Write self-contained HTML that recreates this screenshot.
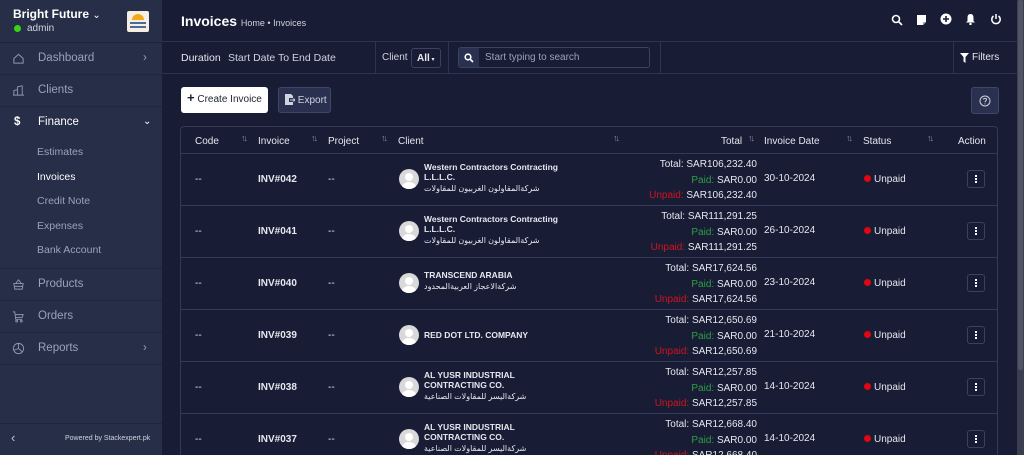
<!DOCTYPE html>
<html style="height:455px;overflow:hidden"><head><meta charset="utf-8"><style>
*{box-sizing:border-box;margin:0;padding:0}
html,body{width:1024px;height:455px;overflow:hidden}
body{background:#181c35;font-family:"Liberation Sans","DejaVu Sans",sans-serif;color:#e6e8ef;font-size:11px;position:relative}
.sb{position:absolute;left:0;top:0;width:162px;height:455px;background:#272e48}
.abs{position:absolute}
.nav{position:absolute;left:0;width:162px;height:32px;border-top:1px solid #20263d;color:#9aa3bb;font-size:11.5px}
.nav span{position:absolute;left:38px;top:9px}
.nav .ic{position:absolute;left:12px;top:9px;width:13px;height:13px}
.sub{position:absolute;left:37px;color:#9aa3bb;font-size:10.5px}
.hd{position:absolute;left:162px;top:0;right:6px;height:42px;border-bottom:1px solid #2d3350}
.fb{position:absolute;left:162px;top:42px;right:6px;height:32px;border-bottom:1px solid #2d3350}
.vl{position:absolute;top:42px;height:32px;width:1px;background:#2d3350}
.tbl{position:absolute;left:180px;top:126px;width:818px;height:329px;border:1px solid #343a56;border-bottom:none;border-radius:4px 4px 0 0;overflow:hidden}
.row{position:absolute;left:0;width:816px;border-top:1px solid #343a56;height:52px}
.th{position:absolute;top:9px;font-size:10px;color:#e6e8ef}
.sort{position:absolute;top:6px;font-size:9px;color:#8a91a8;letter-spacing:-2px}
.c{position:absolute;font-size:10px}
.av{position:absolute;left:218px;width:20px;height:20px;border-radius:50%;background:#d9d9d9;overflow:hidden}
.av:before{content:"";position:absolute;left:6px;top:4px;width:8px;height:8px;border-radius:50%;background:#fff}
.av:after{content:"";position:absolute;left:3px;top:13px;width:14px;height:10px;border-radius:50%;background:#fff}
.nm{position:absolute;left:243px;font-size:8.5px;font-weight:bold;line-height:10px;color:#e6e8ef}
.ar{font-size:8px;font-weight:normal;margin-top:2px;direction:rtl;text-align:left}
.tot{position:absolute;right:240px;text-align:right;font-size:10px;line-height:15.5px;width:120px}
.g{color:#2ea043}.r{color:#d0151f}
.dt{position:absolute;left:583px;font-size:10px}
.st{position:absolute;left:683px;font-size:10px}
.st:before{content:"";display:inline-block;width:7px;height:7px;border-radius:50%;background:#e0060f;margin-right:3px;vertical-align:-0px}
.act{position:absolute;left:786px;width:18px;height:18px;border:1px solid #3b4260;border-radius:3px}
.act i{position:absolute;left:7px;width:2px;height:2px;background:#fff}
</style></head><body>
<div class="sb">
 <div class="abs" style="left:13px;top:7px;font-weight:bold;font-size:12px;color:#fff">Bright Future <span style="font-weight:normal;font-size:10px">&#8964;</span></div>
 <div class="abs" style="left:14px;top:25px;width:7px;height:7px;border-radius:50%;background:#39d312"></div>
 <div class="abs" style="left:27px;top:23px;font-size:10px;color:#cfd3de">admin</div>
 <div class="abs" style="left:127px;top:11px;width:22px;height:21px;background:#f4efe2;border-radius:2px;overflow:hidden"><div style="margin:3px auto 0;width:12px;height:6px;border-radius:6px 6px 0 0;background:#f4a71c"></div><div style="margin:2px 3px;height:2px;background:#4a6a9a"></div><div style="margin:1px 3px;height:2px;background:#4a6a9a"></div></div>
 <div class="nav" style="top:42px;border-top:1px solid #1d2338"><svg class="ic" viewBox="0 0 14 14" fill="none" stroke="#8e97ae" stroke-width="1.1"><path d="M2 7L7 2.5 12 7V12H2Z"/></svg><span>Dashboard</span><span style="left:143px">&#8250;</span></div>
 <div class="nav" style="top:74px"><svg class="ic" viewBox="0 0 14 14" fill="none" stroke="#8e97ae" stroke-width="1"><path d="M2 12V7L6 6V12M6 12V3L11 2V12M1 12H13"/></svg><span>Clients</span></div>
 <div class="nav" style="top:106px;color:#fff"><span style="left:14px;font-weight:bold">$</span><span>Finance</span><span style="left:143px;font-size:10px">&#8964;</span></div>
 <div class="sub" style="top:146px">Estimates</div>
 <div class="sub" style="top:171px;color:#fff">Invoices</div>
 <div class="sub" style="top:195px">Credit Note</div>
 <div class="sub" style="top:220px">Expenses</div>
 <div class="sub" style="top:244px">Bank Account</div>
 <div class="nav" style="top:268px"><svg class="ic" viewBox="0 0 14 14" fill="none" stroke="#8e97ae" stroke-width="1"><path d="M2 6H12L11 12H3ZM4 6L7 2 10 6M2 9H12"/></svg><span>Products</span></div>
 <div class="nav" style="top:300px"><svg class="ic" viewBox="0 0 14 14" fill="none" stroke="#8e97ae" stroke-width="1"><path d="M1 2H3L4 10H11M3.5 5H12L11 8H4"/><circle cx="5" cy="12" r="1"/><circle cx="10" cy="12" r="1"/></svg><span>Orders</span></div>
 <div class="nav" style="top:332px"><svg class="ic" viewBox="0 0 14 14" fill="none" stroke="#8e97ae" stroke-width="1"><circle cx="7" cy="7" r="5.5"/><path d="M7 1.5V7L11 10.5M7 7L2 9"/></svg><span>Reports</span><span style="left:143px">&#8250;</span></div>
 <div class="abs" style="left:0;top:364px;width:162px;border-top:1px solid #20263d"></div>
 <div class="abs" style="left:0;top:423px;width:162px;border-top:1px solid #20263d"></div>
 <div class="abs" style="left:11px;top:430px;font-size:13px;color:#c0c6d6">&#8249;</div>
 <div class="abs" style="left:65px;top:435px;font-size:7px;color:#d0d4df">Powered by Stackexpert.pk</div>
</div>
<div class="abs" style="left:1017px;top:0;width:7px;height:455px;background:#3a3e50"></div>
<div class="abs" style="left:1018px;top:0;width:5px;height:370px;background:#505465;border-radius:2px"></div>
<div class="hd">
 <div class="abs" style="left:19px;top:13px;font-size:14px;font-weight:bold;color:#fff">Invoices <span style="font-size:9px;font-weight:normal;color:#cfd3de">Home &bull; Invoices</span></div>
 <svg class="abs" style="left:729px;top:14px" width="12" height="12" viewBox="0 0 12 12" fill="none" stroke="#fff" stroke-width="1.6"><circle cx="5" cy="5" r="3.5"/><path d="M7.5 7.5L11 11"/></svg>
 <svg class="abs" style="left:754px;top:14px" width="11" height="12" viewBox="0 0 11 12"><path d="M1 1H10V8L7 11H1Z" fill="#fff"/><path d="M7 11V8H10" fill="#aaa"/></svg>
 <svg class="abs" style="left:778px;top:13px" width="12" height="12" viewBox="0 0 12 12"><circle cx="6" cy="6" r="5.5" fill="#fff"/><path d="M6 3V9M3 6H9" stroke="#181c35" stroke-width="1.6"/></svg>
 <svg class="abs" style="left:803px;top:13px" width="11" height="12" viewBox="0 0 11 12"><path d="M5.5 1C3 1 2.5 3 2.5 5V8L1 9.5H10L8.5 8V5C8.5 3 8 1 5.5 1Z" fill="#fff"/><circle cx="5.5" cy="11" r="1.2" fill="#fff"/></svg>
 <svg class="abs" style="left:828px;top:13px" width="12" height="12" viewBox="0 0 12 12" fill="none" stroke="#fff" stroke-width="1.5"><path d="M3.5 3A4.2 4.2 0 1 0 8.5 3M6 1V6"/></svg>
</div>
<div class="fb">
 <div class="abs" style="left:19px;top:10px;font-size:10.5px;color:#e6e8ef">Duration</div>
 <div class="abs" style="left:66px;top:10px;font-size:10.5px;color:#cfd3de">Start Date To End Date</div>
 <div class="abs" style="left:220px;top:10px;font-size:10px;color:#cfd3de">Client</div>
 <div class="abs" style="left:249px;top:6px;width:30px;height:20px;border:1px solid #3b4260;border-radius:3px;font-size:10px;font-weight:bold;padding:4px 0 0 5px">All<span style="font-size:6px;font-weight:normal"> &#9662;</span></div>
 <div class="abs" style="left:296px;top:5px;width:192px;height:21px;border:1px solid #3b4260;border-radius:3px;overflow:hidden"><div style="position:absolute;left:0;top:0;width:20px;height:20px;background:#2a3150"></div><svg style="position:absolute;left:5px;top:5px" width="10" height="10" viewBox="0 0 10 10" fill="none" stroke="#fff" stroke-width="1.6"><circle cx="4" cy="4" r="2.8"/><path d="M6 6L9 9"/></svg><div style="position:absolute;left:26px;top:4px;font-size:10px;color:#9aa3bb">Start typing to search</div></div>
 <svg class="abs" style="left:798px;top:11px" width="9" height="10" viewBox="0 0 9 10"><path d="M0 0H9L5.5 4V10L3.5 8.5V4Z" fill="#fff"/></svg>
 <div class="abs" style="left:810px;top:10px;font-size:10px;color:#e6e8ef">Filters</div>
</div>
<div class="vl" style="left:375px"></div><div class="vl" style="left:448px"></div><div class="vl" style="left:660px"></div><div class="vl" style="left:953px"></div>
<div class="abs" style="left:181px;top:87px;width:87px;height:26px;background:#fff;border-radius:3px;color:#1e2233;font-size:10px;padding:7px 0 0 6px"><b style="font-size:13px;line-height:8px">+</b> Create Invoice</div>
<div class="abs" style="left:278px;top:87px;width:53px;height:26px;background:#2a3150;border:1px solid #3f4766;border-radius:3px;font-size:10px;padding:6px 0 0 6px;color:#cfd3de"><svg width="10" height="11" viewBox="0 0 10 11" style="vertical-align:-2px"><path d="M0 0H6L8 2V4H4V8H8V11H0Z" fill="#cfd3de"/><path d="M5 6H10M8.5 4.5L10 6 8.5 7.5" stroke="#cfd3de" fill="none"/></svg> Export</div>
<div class="abs" style="left:971px;top:87px;width:28px;height:27px;background:#2a3150;border:1px solid #3f4766;border-radius:3px"><svg style="position:absolute;left:7px;top:7px" width="12" height="12" viewBox="0 0 12 12" fill="none" stroke="#cfd3de"><circle cx="6" cy="6" r="5"/><path d="M4.5 4.5C4.5 3 7.5 3 7.5 4.5 7.5 5.8 6 5.8 6 7.3M6 8.5V9.2"/></svg></div>
<div class="tbl">
 <div class="th" style="left:14px">Code</div><div class="sort" style="left:60px">&#8593;&#8595;</div>
 <div class="th" style="left:77px">Invoice</div><div class="sort" style="left:130px">&#8593;&#8595;</div>
 <div class="th" style="left:147px">Project</div><div class="sort" style="left:200px">&#8593;&#8595;</div>
 <div class="th" style="left:217px">Client</div><div class="sort" style="left:432px">&#8593;&#8595;</div>
 <div class="th" style="left:540px">Total</div><div class="sort" style="left:567px">&#8593;&#8595;</div>
 <div class="th" style="left:583px">Invoice Date</div><div class="sort" style="left:665px">&#8593;&#8595;</div>
 <div class="th" style="left:682px">Status</div><div class="sort" style="left:746px">&#8593;&#8595;</div>
 <div class="th" style="left:777px">Action</div>

 <div class="row" style="top:26px"><div class="c" style="left:14px;top:20px">--</div><div class="c" style="left:77px;top:20px;font-weight:bold">INV#042</div><div class="c" style="left:147px;top:20px">--</div><div class="av" style="top:15px"></div><div class="nm" style="top:8px">Western Contractors Contracting<br>L.L.L.C.<div class="ar">شركةالمقاولون الغربيون للمقاولات</div></div><div class="tot" style="top:3px">Total: SAR106,232.40<br><span class="g">Paid:</span> SAR0.00<br><span class="r">Unpaid:</span> SAR106,232.40</div><div class="dt" style="top:19px">30-10-2024</div><div class="st" style="top:20px">Unpaid</div><div class="act" style="top:16px"><i style="top:4px"></i><i style="top:7px"></i><i style="top:10px"></i></div></div>

 <div class="row" style="top:78px"><div class="c" style="left:14px;top:20px">--</div><div class="c" style="left:77px;top:20px;font-weight:bold">INV#041</div><div class="c" style="left:147px;top:20px">--</div><div class="av" style="top:15px"></div><div class="nm" style="top:8px">Western Contractors Contracting<br>L.L.L.C.<div class="ar">شركةالمقاولون الغربيون للمقاولات</div></div><div class="tot" style="top:3px">Total: SAR111,291.25<br><span class="g">Paid:</span> SAR0.00<br><span class="r">Unpaid:</span> SAR111,291.25</div><div class="dt" style="top:19px">26-10-2024</div><div class="st" style="top:20px">Unpaid</div><div class="act" style="top:16px"><i style="top:4px"></i><i style="top:7px"></i><i style="top:10px"></i></div></div>

 <div class="row" style="top:130px"><div class="c" style="left:14px;top:20px">--</div><div class="c" style="left:77px;top:20px;font-weight:bold">INV#040</div><div class="c" style="left:147px;top:20px">--</div><div class="av" style="top:15px"></div><div class="nm" style="top:12px">TRANSCEND ARABIA<div class="ar">شركةالاعجاز العربيةالمحدود</div></div><div class="tot" style="top:3px">Total: SAR17,624.56<br><span class="g">Paid:</span> SAR0.00<br><span class="r">Unpaid:</span> SAR17,624.56</div><div class="dt" style="top:19px">23-10-2024</div><div class="st" style="top:20px">Unpaid</div><div class="act" style="top:16px"><i style="top:4px"></i><i style="top:7px"></i><i style="top:10px"></i></div></div>

 <div class="row" style="top:182px"><div class="c" style="left:14px;top:20px">--</div><div class="c" style="left:77px;top:20px;font-weight:bold">INV#039</div><div class="c" style="left:147px;top:20px">--</div><div class="av" style="top:15px"></div><div class="nm" style="top:20px">RED DOT LTD. COMPANY</div><div class="tot" style="top:3px">Total: SAR12,650.69<br><span class="g">Paid:</span> SAR0.00<br><span class="r">Unpaid:</span> SAR12,650.69</div><div class="dt" style="top:19px">21-10-2024</div><div class="st" style="top:20px">Unpaid</div><div class="act" style="top:16px"><i style="top:4px"></i><i style="top:7px"></i><i style="top:10px"></i></div></div>

 <div class="row" style="top:234px"><div class="c" style="left:14px;top:20px">--</div><div class="c" style="left:77px;top:20px;font-weight:bold">INV#038</div><div class="c" style="left:147px;top:20px">--</div><div class="av" style="top:15px"></div><div class="nm" style="top:8px">AL YUSR INDUSTRIAL<br>CONTRACTING CO.<div class="ar">شركةاليسر للمقاولات الصناعية</div></div><div class="tot" style="top:3px">Total: SAR12,257.85<br><span class="g">Paid:</span> SAR0.00<br><span class="r">Unpaid:</span> SAR12,257.85</div><div class="dt" style="top:19px">14-10-2024</div><div class="st" style="top:20px">Unpaid</div><div class="act" style="top:16px"><i style="top:4px"></i><i style="top:7px"></i><i style="top:10px"></i></div></div>

 <div class="row" style="top:286px"><div class="c" style="left:14px;top:20px">--</div><div class="c" style="left:77px;top:20px;font-weight:bold">INV#037</div><div class="c" style="left:147px;top:20px">--</div><div class="av" style="top:15px"></div><div class="nm" style="top:8px">AL YUSR INDUSTRIAL<br>CONTRACTING CO.<div class="ar">شركةاليسر للمقاولات الصناعية</div></div><div class="tot" style="top:3px">Total: SAR12,668.40<br><span class="g">Paid:</span> SAR0.00<br><span class="r">Unpaid:</span> SAR12,668.40</div><div class="dt" style="top:19px">14-10-2024</div><div class="st" style="top:20px">Unpaid</div><div class="act" style="top:16px"><i style="top:4px"></i><i style="top:7px"></i><i style="top:10px"></i></div></div>
</div>
</body></html>
